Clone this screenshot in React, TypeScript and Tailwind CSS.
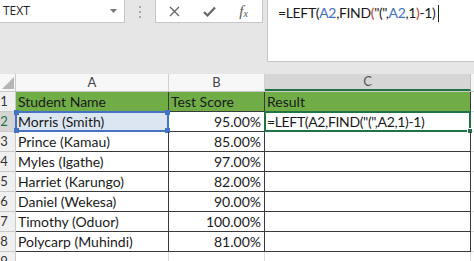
import React from 'react'

const students = [
  ['Morris (Smith)', '95.00%'],
  ['Prince (Kamau)', '85.00%'],
  ['Myles (Igathe)', '97.00%'],
  ['Harriet (Karungo)', '82.00%'],
  ['Daniel (Wekesa)', '90.00%'],
  ['Timothy (Oduor)', '100.00%'],
  ['Polycarp (Muhindi)', '81.00%'],
]

const cellFont = { fontFamily: 'Lato, "Open Sans", sans-serif' }

function Formula() {
  return (
    <>
      =LEFT(<span className="text-[#3f6fc4]">A2</span>,FIND<span className="text-[#c0392b]">(</span>"(",
      <span className="text-[#3f6fc4]">A2</span>,1<span className="text-[#c0392b]">)</span>-1)
    </>
  )
}

function RowHead({ n, active }: { n: number; active?: boolean }) {
  return (
    <div
      className={`w-[16px] shrink-0 overflow-hidden border-r border-b border-[#c9c9c9] flex items-center text-[13px] ${
        active ? 'bg-[#d4d4d4] text-[#217346]' : 'bg-[#f0f0f0] text-[#333]'
      }`}
    >
      <span className="block w-[22px] -ml-[7px] shrink-0 text-center">{n}</span>
    </div>
  )
}

export default function App() {
  return (
    <div className="w-[474px] h-[261px] overflow-hidden bg-white text-[#1a1a1a]" style={cellFont}>
      {/* Name box + formula bar */}
      <div className="h-[74px] bg-[#e6e6e6] flex items-start">
        <div
          className="w-[125px] h-[23px] bg-white border-r border-b border-[#c6c6c6] flex items-center justify-between pl-[3px] pr-[7px] text-[12px] text-[#222]"
          style={{ fontFamily: '"Open Sans", sans-serif' }}
        >
          <span>TEXT</span>
          <svg width="7" height="4" viewBox="0 0 7 4">
            <path d="M0 0h7L3.5 4z" fill="#777" />
          </svg>
        </div>
        <div className="w-[30px] h-[23px] flex flex-col items-center justify-center gap-[3px]">
          <span className="w-[2px] h-[2px] bg-[#a8a8a8]" />
          <span className="w-[2px] h-[2px] bg-[#a8a8a8]" />
          <span className="w-[2px] h-[2px] bg-[#a8a8a8]" />
        </div>
        <div className="w-[108px] h-[23px] bg-white border-r border-b border-l border-[#c6c6c6] flex items-center px-[1px]">
          <div className="w-[35px] flex justify-center">
            <svg width="11" height="11" viewBox="0 0 11 11">
              <path d="M1 1l9 9M10 1l-9 9" stroke="#666" strokeWidth="1.4" />
            </svg>
          </div>
          <div className="w-[35px] flex justify-center">
            <svg width="13" height="11" viewBox="0 0 13 11">
              <path d="M1 6l3.5 3.5L12 1.5" stroke="#666" strokeWidth="2.2" fill="none" />
            </svg>
          </div>
          <div
            className="w-[35px] flex justify-center items-end text-[15px] italic text-[#555] leading-none"
            style={{ fontFamily: '"Liberation Serif", serif' }}
          >
            f<span className="text-[10px]">x</span>
          </div>
        </div>
        <div className="ml-[4px] flex-1 h-[62px] bg-white border-l border-b border-[#c6c6c6] pl-[10px] pt-[3px] text-[14px] tracking-[-0.35px] flex items-start">
          <span className="leading-[19px]">
            <Formula />
          </span>
          <span className="ml-[2px] mt-[2px] w-[1px] h-[17px] bg-[#222]" />
        </div>
      </div>

      {/* Column headers */}
      <div className="h-[18px] flex bg-[#f7f7f7] border-b border-[#c9c9c9] text-[13px] text-[#444]">
        <div className="w-[16px] shrink-0 border-r border-[#c9c9c9] flex items-end justify-end pb-[2px] pr-[1px]">
          <svg width="12" height="12" viewBox="0 0 12 12">
            <path d="M12 0v12H0z" fill="#b5b5b5" />
          </svg>
        </div>
        <div className="w-[153px] shrink-0 border-r border-[#d0d0d0] flex items-center justify-center">A</div>
        <div className="w-[96px] shrink-0 border-r border-[#d0d0d0] flex items-center justify-center">B</div>
        <div className="w-[206px] shrink-0 bg-[#d6d6d6] border-r border-[#c0c0c0] border-b-2 border-b-[#217346] flex items-center justify-center text-[#555]">
          C
        </div>
        <div className="flex-1" />
      </div>

      {/* Header row 1 */}
      <div className="h-[20px] flex text-[14px]">
        <RowHead n={1} />
        <div className="w-[153px] shrink-0 bg-[#70ad47] border-r border-b border-[#3a3a3a] pl-[2px] flex items-center">
          Student Name
        </div>
        <div className="w-[96px] shrink-0 bg-[#70ad47] border-r border-b border-[#3a3a3a] pl-[2px] flex items-center">
          Test Score
        </div>
        <div className="w-[206px] shrink-0 bg-[#70ad47] border-r border-b border-[#3a3a3a] pl-[2px] flex items-center">
          Result
        </div>
        <div className="flex-1 border-b border-[#d9d9d9]" />
      </div>

      {students.map(([name, score], i) => {
        const first = i === 0
        return (
          <div key={name} className="h-[20px] flex text-[14px]">
            <RowHead n={i + 2} active={first} />
            <div
              className={`relative w-[153px] shrink-0 border-r border-b border-[#3a3a3a] pl-[2px] flex items-center ${
                first ? 'bg-[#dce6f2]' : ''
              }`}
            >
              {name}
              {first && (
                <div className="absolute -top-[1px] -left-[1px] -right-[1px] -bottom-[1px] border-2 border-[#4472c4]">
                  <span className="absolute -top-[3px] -left-[3px] w-[5px] h-[5px] bg-[#4472c4]" />
                  <span className="absolute -top-[3px] -right-[3px] w-[5px] h-[5px] bg-[#4472c4]" />
                  <span className="absolute -bottom-[3px] -left-[3px] w-[5px] h-[5px] bg-[#4472c4]" />
                  <span className="absolute -bottom-[3px] -right-[3px] w-[5px] h-[5px] bg-[#4472c4]" />
                </div>
              )}
            </div>
            <div className="w-[96px] shrink-0 border-r border-b border-[#3a3a3a] pr-[3px] flex items-center justify-end">
              {score}
            </div>
            <div className="relative w-[206px] shrink-0 border-r border-b border-[#3a3a3a] pl-[2px] flex items-center tracking-[-0.35px]">
              {first && (
                <>
                  =LEFT(A2,FIND("(",A2,1)-1)
                  <div className="absolute -top-[1px] -left-[1px] -right-[1px] -bottom-[1px] border-2 border-[#217346]">
                    <span className="absolute -bottom-[4px] -right-[4px] w-[6px] h-[6px] bg-[#217346] border border-white" />
                  </div>
                </>
              )}
            </div>
            <div className="flex-1 border-b border-[#d9d9d9]" />
          </div>
        )
      })}

      {/* Row 9 */}
      <div className="h-[20px] flex text-[14px]">
        <RowHead n={9} />
        <div className="w-[153px] shrink-0 border-r border-[#d9d9d9]" />
        <div className="w-[96px] shrink-0 border-r border-[#d9d9d9]" />
        <div className="w-[206px] shrink-0 border-r border-[#d9d9d9]" />
        <div className="flex-1" />
      </div>
    </div>
  )
}
